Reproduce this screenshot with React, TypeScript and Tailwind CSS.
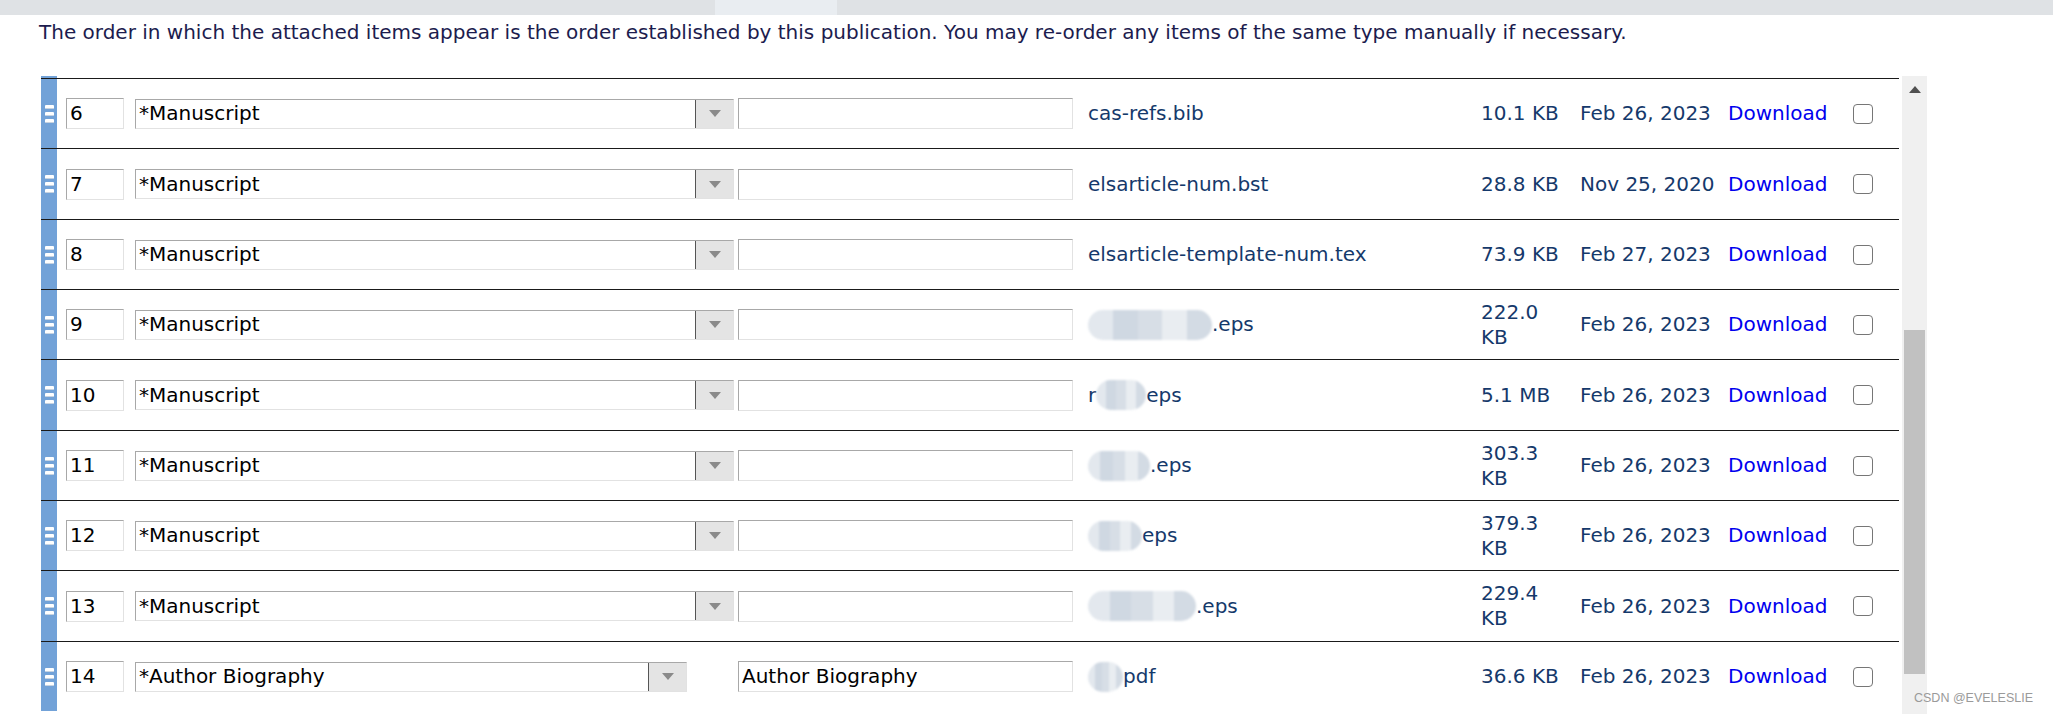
import React from 'react'

type Part = string | { blob: number }

type Row = {
  n: string
  type: string
  desc: string
  file: Part[]
  size: string
  date: string
  narrow?: boolean
}

const rows: Row[] = [
  { n: '6', type: '*Manuscript', desc: '', file: ['cas-refs.bib'], size: '10.1 KB', date: 'Feb 26, 2023' },
  { n: '7', type: '*Manuscript', desc: '', file: ['elsarticle-num.bst'], size: '28.8 KB', date: 'Nov 25, 2020' },
  { n: '8', type: '*Manuscript', desc: '', file: ['elsarticle-template-num.tex'], size: '73.9 KB', date: 'Feb 27, 2023' },
  { n: '9', type: '*Manuscript', desc: '', file: [{ blob: 124 }, '.eps'], size: '222.0 KB', date: 'Feb 26, 2023' },
  { n: '10', type: '*Manuscript', desc: '', file: ['r', { blob: 50 }, 'eps'], size: '5.1 MB', date: 'Feb 26, 2023' },
  { n: '11', type: '*Manuscript', desc: '', file: [{ blob: 62 }, '.eps'], size: '303.3 KB', date: 'Feb 26, 2023' },
  { n: '12', type: '*Manuscript', desc: '', file: [{ blob: 54 }, 'eps'], size: '379.3 KB', date: 'Feb 26, 2023' },
  { n: '13', type: '*Manuscript', desc: '', file: [{ blob: 108 }, '.eps'], size: '229.4 KB', date: 'Feb 26, 2023' },
  { n: '14', type: '*Author Biography', desc: 'Author Biography', file: [{ blob: 35 }, 'pdf'], size: '36.6 KB', date: 'Feb 26, 2023', narrow: true },
]

// blurred redaction patch over the file name
function Blob({ w }: { w: number }) {
  return (
    <span
      className="inline-flex h-[30px] overflow-hidden rounded-full align-middle blur-[1px]"
      style={{ width: w }}
    >
      <span className="flex-1 bg-[#e3e8ee]" />
      <span className="flex-1 bg-[#cfd8e2]" />
      <span className="flex-1 bg-[#d7dee6]" />
      <span className="flex-1 bg-[#e9edf1]" />
      <span className="flex-1 bg-[#d3dbe4]" />
    </span>
  )
}

function Handle() {
  return (
    <div className="flex w-[16px] shrink-0 items-center justify-center self-stretch bg-[#72a2d8]">
      <div className="flex flex-col gap-[3px]">
        <div className="h-[4px] w-[9px] rounded-[1px] border-b border-b-[#c8d3e0] bg-white" />
        <div className="h-[4px] w-[9px] rounded-[1px] border-b border-b-[#c8d3e0] bg-white" />
        <div className="h-[4px] w-[9px] rounded-[1px] border-b border-b-[#c8d3e0] bg-white" />
      </div>
    </div>
  )
}

function Field({ value, className }: { value: string; className: string }) {
  return (
    <div
      className={
        'flex h-[31px] items-center border border-t-[#a8a8a8] border-l-[#a8a8a8] border-r-[#e2e2e2] border-b-[#e2e2e2] bg-white pl-[3px] text-black ' +
        className
      }
    >
      {value}
    </div>
  )
}

function Select({ value, narrow }: { value: string; narrow?: boolean }) {
  return (
    <div className="w-[603px] shrink-0">
      <div
        className={
          'flex h-[30px] items-stretch border border-t-[#a8a8a8] border-l-[#a8a8a8] border-r-[#e2e2e2] border-b-[#e2e2e2] bg-white ' +
          (narrow ? 'w-[552px]' : 'w-[599px]')
        }
      >
        <div className="flex flex-1 items-center pl-[3px] text-black">{value}</div>
        <div className="flex w-[38px] items-center justify-center border-l border-l-[#555] bg-[#e4e4e4]">
          <svg width="12" height="7" viewBox="0 0 12 7">
            <path d="M0 0 H12 L6 7 Z" fill="#8a8a8a" />
          </svg>
        </div>
      </div>
    </div>
  )
}

export default function App() {
  return (
    <div className="relative h-[714px] w-[2053px] overflow-hidden bg-white font-['DejaVu_Sans',sans-serif] text-[20px] leading-[25px]">
      <div className="flex h-[15px]">
        <div className="w-[715px] bg-[#dfe2e5]" />
        <div className="w-[122px] bg-[#e9edf1]" />
        <div className="flex-1 bg-[#dfe2e5]" />
      </div>

      <p className="mt-[5px] pl-[39px] text-[#1c1c4e]">
        The order in which the attached items appear is the order established by this publication. You may re-order any
        items of the same type manually if necessary.
      </p>

      <div className="mt-[31px] flex h-[639px] pl-[41px]">
        <div className="w-[1858px] overflow-hidden">
          <div className="flex h-[2px]">
            <div className="w-[16px] bg-[#72a2d8]" />
          </div>
          {rows.map((r, i) => (
            <div
              key={r.n}
              className={
                'flex items-center border-t border-t-[#1a1a1a] ' + (i % 3 === 1 ? 'h-[71px]' : 'h-[70px]')
              }
            >
              <Handle />
              <Field value={r.n} className="ml-[9px] w-[58px] shrink-0" />
              <div className="ml-[11px]">
                <Select value={r.type} narrow={r.narrow} />
              </div>
              <Field value={r.desc} className="w-[335px] shrink-0" />
              <div className="ml-[15px] flex w-[393px] shrink-0 items-center text-[#15396b]">
                {r.file.map((p, j) =>
                  typeof p === 'string' ? <span key={j}>{p}</span> : <Blob key={j} w={p.blob} />
                )}
              </div>
              <div className="w-[99px] shrink-0 text-[#15396b]">
                <div className="w-[84px]">{r.size}</div>
              </div>
              <div className="w-[148px] shrink-0 whitespace-nowrap text-[#15396b]">{r.date}</div>
              <div className="w-[125px] shrink-0 text-[#0000ee]">Download</div>
              <div className="h-[20px] w-[20px] shrink-0 rounded-[4px] border-[1.5px] border-[#767676] bg-white" />
            </div>
          ))}
        </div>

        <div className="ml-[3px] flex w-[25px] flex-col bg-[#f0f0f0]">
          <div className="flex h-[254px] justify-center pt-[10px]">
            <svg width="12" height="7" viewBox="0 0 12 7">
              <path d="M6 0 L12 7 H0 Z" fill="#505050" />
            </svg>
          </div>
          <div className="mx-auto h-[344px] w-[21px] bg-[#c1c1c1]" />
        </div>
      </div>

      <div className="absolute left-[1914px] top-[691px] font-['Liberation_Sans',sans-serif] text-[12.5px] leading-[14px] text-[#9a9a9a]">
        CSDN @EVELESLIE
      </div>
    </div>
  )
}
